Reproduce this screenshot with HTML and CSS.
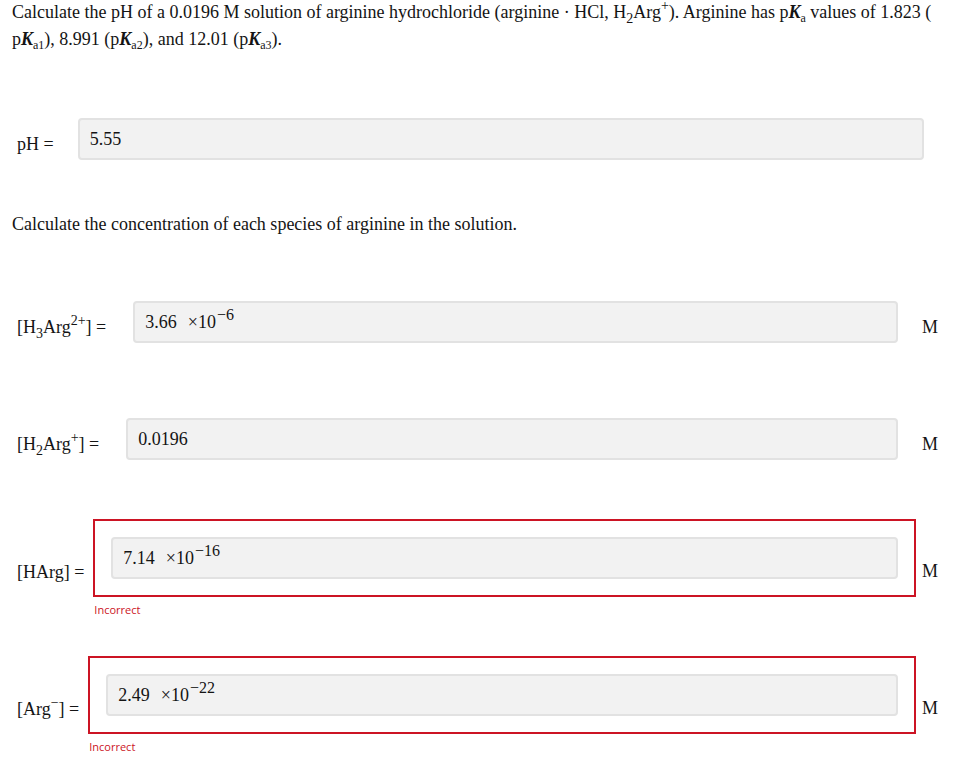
FILE: index.html
```html
<!DOCTYPE html>
<html>
<head>
<meta charset="utf-8">
<link rel="stylesheet" href="styles.css">
</head>
<body>
<div class="question">
  <p class="intro">Calculate the pH of a 0.0196 M solution of arginine hydrochloride (arginine · HCl, H<sub>2</sub>Arg<sup>+</sup>). Arginine has p<i>K</i><sub class="ka">a</sub> values of 1.823 ( p<i>K</i><sub class="ka">a1</sub>), 8.991 (p<i>K</i><sub class="ka">a2</sub>), and 12.01 (p<i>K</i><sub class="ka">a3</sub>).</p>

  <div class="row row-ph">
    <span class="label">pH =</span>
    <div class="field">
      <div class="wrap"><div class="box">5.55</div></div>
    </div>
  </div>

  <p class="intro2">Calculate the concentration of each species of arginine in the solution.</p>

  <div class="rows">
    <div class="row">
      <span class="label">[H<sub>3</sub>Arg<sup>2+</sup>] =</span>
      <div class="field">
        <div class="wrap"><div class="box">3.66<span class="times">×10<sup class="exp">−6</sup></span></div></div>
      </div>
      <span class="unit">M</span>
    </div>

    <div class="row">
      <span class="label">[H<sub>2</sub>Arg<sup>+</sup>] =</span>
      <div class="field">
        <div class="wrap"><div class="box">0.0196</div></div>
      </div>
      <span class="unit">M</span>
    </div>

    <div class="row err">
      <span class="label">[HArg] =</span>
      <div class="field">
        <div class="wrap"><div class="box">7.14<span class="times">×10<sup class="exp">−16</sup></span></div></div>
        <div class="msg">Incorrect</div>
      </div>
      <span class="unit">M</span>
    </div>

    <div class="row err">
      <span class="label">[Arg<sup>−</sup>] =</span>
      <div class="field">
        <div class="wrap"><div class="box">2.49<span class="times">×10<sup class="exp">−22</sup></span></div></div>
        <div class="msg">Incorrect</div>
      </div>
      <span class="unit">M</span>
    </div>
  </div>
</div>
</body>
</html>
```

FILE: styles.css
```css
html, body {
  margin: 0;
  padding: 0;
  background: #ffffff;
}

body {
  font-family: "Liberation Serif", "Times New Roman", serif;
  font-size: 18px;
  color: #141414;
}

.question {
  padding: 0 12px 0 12px;
}

sub, sup {
  font-size: 14px;
  line-height: 0;
}

sub { vertical-align: -5px; }
sup { vertical-align: 8px; }

sub.ka { font-size: 12px; vertical-align: -4px; }

i {
  font-style: italic;
  font-weight: bold;
}

.intro {
  margin: -1px 0 0 0;
  line-height: 27px;
}

.row {
  display: flex;
  align-items: flex-start;
  padding-left: 5px;
}

.row-ph {
  margin-top: 47px;
}

.label {
  line-height: 20px;
  padding-top: 34px;
  margin-right: 9px;
  white-space: nowrap;
}

.row-ph .label {
  margin-right: 6px;
}

.field {
  flex: 1;
  display: flex;
  flex-direction: column;
}

.wrap {
  border: 2px solid transparent;
  padding: 16px;
}

.err .wrap {
  border-color: #cc1424;
}

.box {
  height: 38px;
  border: 2px solid #e2e2e2;
  border-radius: 4px;
  background: #f2f2f2;
  padding: 0 10px;
  display: flex;
  align-items: center;
  line-height: 20px;
}

.times {
  margin-left: 11px;
}

.exp {
  font-size: 16px;
  vertical-align: 8px;
  margin-left: 1px;
}

.unit {
  width: 20px;
  padding-left: 6px;
  line-height: 20px;
  padding-top: 34px;
}

.err .label {
  padding-top: 43px;
}

.err .unit {
  padding-top: 42px;
}

.msg {
  font-family: "Open Sans", "Noto Sans", sans-serif;
  font-size: 11px;
  color: #cc1424;
  line-height: 18px;
  margin-top: 4px;
  padding-left: 1px;
}

.intro2 {
  margin: 36px 0 0 0;
  line-height: 20px;
}

.rows {
  margin-top: 49px;
}

.rows .row + .row {
  margin-top: 39px;
}

.rows .row + .row.err {
  margin-top: 41px;
}

.rows .row.err + .row.err {
  margin-top: 37px;
}
```
